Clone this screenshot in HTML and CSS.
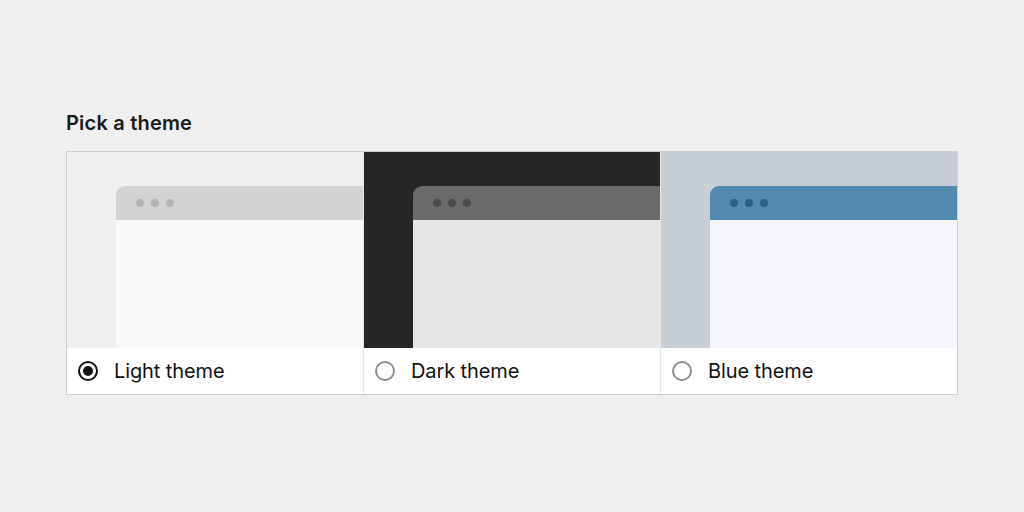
FILE: index.html
```html
<!DOCTYPE html>
<html lang="en">
<head>
<meta charset="utf-8">
<title>Pick a theme</title>
<link rel="stylesheet" href="styles.css">
</head>
<body>
<main class="page">
  <h2 class="title">Pick a theme</h2>
  <div class="themes">
    <label class="theme theme--light">
      <div class="preview">
        <div class="window">
          <div class="bar"><span class="dot"></span><span class="dot"></span><span class="dot"></span></div>
          <div class="body"></div>
        </div>
      </div>
      <div class="option">
        <span class="radio radio--checked"></span>
        <span class="name">Light theme</span>
      </div>
    </label>
    <label class="theme theme--dark">
      <div class="preview">
        <div class="window">
          <div class="bar"><span class="dot"></span><span class="dot"></span><span class="dot"></span></div>
          <div class="body"></div>
        </div>
      </div>
      <div class="option">
        <span class="radio"></span>
        <span class="name">Dark theme</span>
      </div>
    </label>
    <label class="theme theme--blue">
      <div class="preview">
        <div class="window">
          <div class="bar"><span class="dot"></span><span class="dot"></span><span class="dot"></span></div>
          <div class="body"></div>
        </div>
      </div>
      <div class="option">
        <span class="radio"></span>
        <span class="name">Blue theme</span>
      </div>
    </label>
  </div>
</main>
</body>
</html>
```
FILE: styles.css
```css
* { box-sizing: border-box; }
html, body { margin: 0; padding: 0; }
body {
  background: #efefef;
  font-family: Inter, "Noto Sans", "Liberation Sans", sans-serif;
  color: #1a1a1a;
  width: 1024px;
  height: 512px;
}
.page {
  padding: 111px 0 0 66px;
}
.title {
  margin: 0 0 16px 0;
  font-size: 20px;
  font-weight: 600;
  line-height: 24px;
  letter-spacing: 0.2px;
}
.themes {
  display: flex;
  width: 892px;
  border: 1px solid #cfcfcf;
  background: #fff;
}
.theme {
  flex: 1 1 0;
  display: flex;
  flex-direction: column;
  border-left: 1px solid #e6e6e6;
}
.theme:first-child { border-left: 0; }
.preview {
  height: 196px;
  padding: 34px 0 0 49px;
  display: flex;
}
.window {
  flex: 1;
  display: flex;
  flex-direction: column;
}
.bar {
  height: 34px;
  border-top-left-radius: 9px;
  display: flex;
  align-items: center;
  gap: 7px;
  padding-left: 20px;
}
.dot {
  width: 8px;
  height: 8px;
  border-radius: 50%;
}
.body { flex: 1; }

.theme--light .preview { background: #efefef; }
.theme--light .bar { background: #d3d3d3; }
.theme--light .dot { background: #b4b4b4; }
.theme--light .body { background: #f9f9f9; }

.theme--dark .preview { background: #262626; }
.theme--dark .bar { background: #6b6b6b; }
.theme--dark .dot { background: #4a4a4a; }
.theme--dark .body { background: #e6e6e6; }

.theme--blue .preview { background: #c7ced6; }
.theme--blue .bar { background: #538bb0; }
.theme--blue .dot { background: #2e5f85; }
.theme--blue .body { background: #f4f6fb; }

.option {
  height: 46px;
  display: flex;
  align-items: center;
  padding-left: 11px;
  gap: 16px;
}
.radio {
  width: 20px;
  height: 20px;
  border-radius: 50%;
  border: 2px solid #8e8e8e;
  display: flex;
  align-items: center;
  justify-content: center;
}
.radio--checked {
  border: 2.5px solid #111;
}
.radio--checked::after {
  content: "";
  width: 10px;
  height: 10px;
  border-radius: 50%;
  background: #111;
}
.name {
  font-size: 20px;
  line-height: 24px;
  color: #111;
  letter-spacing: -0.1px;
}
```
